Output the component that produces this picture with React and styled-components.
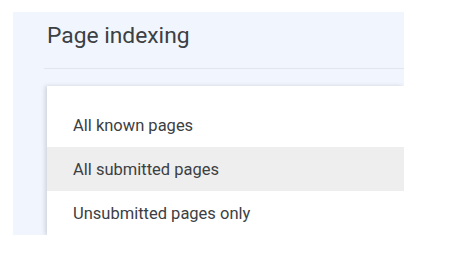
import React from 'react'
import styled, { createGlobalStyle } from 'styled-components'

const options = [
    { label: 'All known pages' },
    { label: 'All submitted pages', active: true },
    { label: 'Unsubmitted pages only' }
]

const App = () => {
    return (
        <Wrapper>
            <GlobalStyle />
            <Panel>
                <Header>
                    <Title>Page indexing</Title>
                </Header>
                <Menu>
                    {options.map((item, i) => (
                        <Option key={i} active={item.active}>{item.label}</Option>
                    ))}
                </Menu>
            </Panel>
        </Wrapper>
    )
}

const GlobalStyle = createGlobalStyle`
    html, body {
        margin: 0;
        padding: 0;
        background: #ffffff;
    }
    body {
        font-family: Roboto, 'Liberation Sans', sans-serif;
    }
`

const Wrapper = styled.div`
    width: 474px;
    height: 255px;
    padding: 12px 0 0 13px;
    box-sizing: border-box;
    background: #ffffff;
`

const Panel = styled.div`
    width: 391px;
    height: 223px;
    background: #f1f5fd;
    display: flex;
    flex-direction: column;
    overflow: hidden;
`

const Header = styled.div`
    height: 56px;
    margin-left: 31px;
    border-bottom: 1px solid #e1e5ee;
    display: flex;
    align-items: flex-start;
    padding-left: 3px;
`

const Title = styled.div`
    margin-top: 11px;
    font-size: 22.8px;
    line-height: 26px;
    color: #3c4043;
`

const Menu = styled.div`
    margin: 17px 0 0 34px;
    flex: 1;
    background: #ffffff;
    padding-top: 17px;
    box-shadow: -2px 0 4px rgba(60, 64, 67, 0.18);
`

const Option = styled.div`
    height: 44px;
    display: flex;
    align-items: center;
    padding-left: 26px;
    font-size: 16.5px;
    color: #3c4043;
    background: ${props => props.active ? '#eeeeee' : 'transparent'};
`

export default App
